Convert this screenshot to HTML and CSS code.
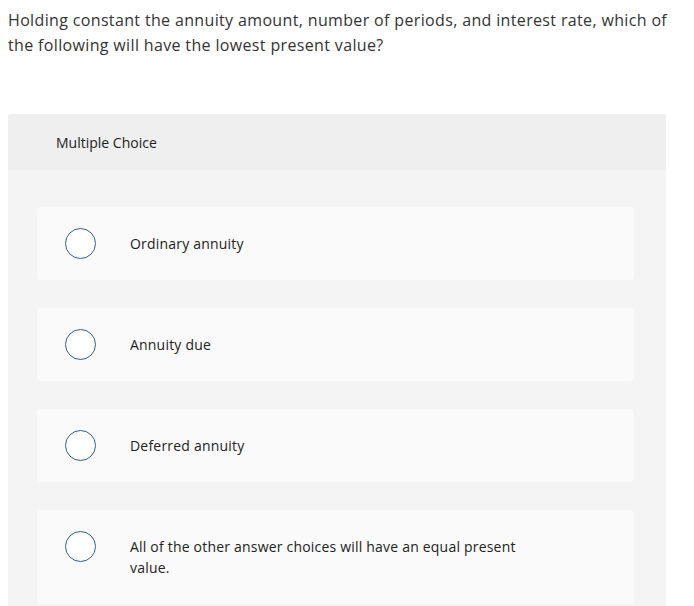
FILE: index.html
```html
<!DOCTYPE html>
<html>
<head>
<meta charset="utf-8">
<link rel="stylesheet" href="styles.css">
</head>
<body>
<div class="page">
  <p class="question">Holding constant the annuity amount, number of periods, and interest rate, which of the following will have the lowest present value?</p>
  <div class="panel">
    <div class="panel-head">Multiple Choice</div>
    <div class="panel-body">
      <div class="choice"><span class="radio"></span><span class="label">Ordinary annuity</span></div>
      <div class="choice"><span class="radio"></span><span class="label">Annuity due</span></div>
      <div class="choice"><span class="radio"></span><span class="label">Deferred annuity</span></div>
      <div class="choice"><span class="radio"></span><span class="label">All of the other answer choices will have an equal present value.</span></div>
    </div>
  </div>
</div>
</body>
</html>
```
FILE: styles.css
```css
html, body {
  margin: 0;
  padding: 0;
  background: #ffffff;
}
body {
  padding: 8px;
  font-family: "Open Sans", "Liberation Sans", sans-serif;
  color: #333333;
}
.question {
  margin: 0;
  max-width: 668px;
  font-size: 16px;
  line-height: 25px;
  color: #333333;
  letter-spacing: 0.35px;
}
.panel {
  width: 658px;
  margin-top: 56px;
  background: #f4f4f4;
  border-radius: 3px;
  overflow: hidden;
}
.panel-head {
  background: #efefef;
  height: 56px;
  display: flex;
  align-items: center;
  padding-left: 48px;
  font-size: 14px;
  color: #222222;
}
.panel-body {
  padding: 37px 32px 6px 29px;
  display: flex;
  flex-direction: column;
  gap: 28px;
}
.choice {
  background: #fafafa;
  border-radius: 4px;
  padding: 26px 0 26px 28px;
  display: flex;
  align-items: flex-start;
  min-height: 21px;
}
.radio {
  flex: none;
  width: 29px;
  height: 29px;
  border: 1.5px solid #2f5f93;
  border-radius: 50%;
  background: #ffffff;
  margin-top: -5.5px;
  margin-bottom: -6px;
}
.label {
  margin-left: 34px;
  font-size: 14px;
  line-height: 21px;
  color: #222222;
  letter-spacing: 0.2px;
  max-width: 410px;
}
```
